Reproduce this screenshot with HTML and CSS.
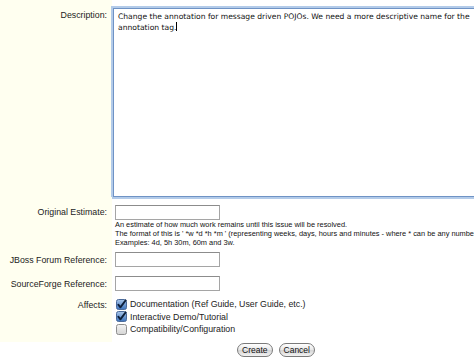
FILE: index.html
```html
<!DOCTYPE html>
<html>
<head>
<meta charset="utf-8">
<link rel="stylesheet" href="styles.css">
</head>
<body>
<div class="page">
  <div class="form">
    <div class="label lbl-desc">Description:</div>
    <div class="field">
      <div class="textarea">Change the annotation for message driven POJOs. We need a more descriptive name for the annotation tag.<span class="caret"></span></div>
    </div>

    <div class="label lbl-est">Original Estimate:</div>
    <div class="field field-est">
      <div class="input"></div>
      <div class="help">
        <div>An estimate of how much work remains until this issue will be resolved.</div>
        <div>The format of this is ' *w *d *h *m ' (representing weeks, days, hours and minutes - where * can be any number)</div>
        <div>Examples: 4d, 5h 30m, 60m and 3w.</div>
      </div>
    </div>

    <div class="label lbl-jb">JBoss Forum Reference:</div>
    <div class="field field-jb"><div class="input"></div></div>

    <div class="label lbl-sf">SourceForge Reference:</div>
    <div class="field field-sf"><div class="input"></div></div>

    <div class="label lbl-aff">Affects:</div>
    <div class="field field-aff">
      <div class="check-row">
        <svg class="box" viewBox="0 0 11 11" width="11" height="11"><defs><linearGradient id="bg1" x1="0" y1="0" x2="0" y2="1"><stop offset="0" stop-color="#a9c7ea"/><stop offset="1" stop-color="#3c73bd"/></linearGradient></defs><rect x="0.5" y="0.5" width="10" height="10" rx="2" fill="url(#bg1)" stroke="#4a6a9a"/><path d="M2.3 5.6 L4.4 8.4 L9.6 1.4" fill="none" stroke="#0d1f3a" stroke-width="1.8" stroke-linecap="round" stroke-linejoin="round"/></svg>
        <span>Documentation (Ref Guide, User Guide, etc.)</span>
      </div>
      <div class="check-row">
        <svg class="box" viewBox="0 0 11 11" width="11" height="11"><defs><linearGradient id="bg2" x1="0" y1="0" x2="0" y2="1"><stop offset="0" stop-color="#a9c7ea"/><stop offset="1" stop-color="#3c73bd"/></linearGradient></defs><rect x="0.5" y="0.5" width="10" height="10" rx="2" fill="url(#bg2)" stroke="#4a6a9a"/><path d="M2.3 5.6 L4.4 8.4 L9.6 1.4" fill="none" stroke="#0d1f3a" stroke-width="1.8" stroke-linecap="round" stroke-linejoin="round"/></svg>
        <span>Interactive Demo/Tutorial</span>
      </div>
      <div class="check-row">
        <svg class="box" viewBox="0 0 11 11" width="11" height="11"><defs><linearGradient id="bg3" x1="0" y1="0" x2="0" y2="1"><stop offset="0" stop-color="#f4f4f4"/><stop offset="1" stop-color="#d4d4d4"/></linearGradient></defs><rect x="0.5" y="0.5" width="10" height="10" rx="2" fill="url(#bg3)" stroke="#8e8e8e"/></svg>
        <span>Compatibility/Configuration</span>
      </div>
    </div>
  </div>
  <div class="buttons">
    <button class="btn">Create</button>
    <button class="btn">Cancel</button>
  </div>
</div>
</body>
</html>
```
FILE: styles.css
```css
html, body {
  margin: 0;
  padding: 0;
  background: #ffffff;
  overflow: hidden;
}
.page {
  width: 474px;
  height: 358px;
  overflow: hidden;
  font-family: "Liberation Sans", Arial, sans-serif;
  color: #222;
}
.form {
  display: grid;
  grid-template-columns: 112px 1fr;
}
.label {
  background: #fffff0;
  text-align: right;
  padding-right: 5px;
  font-size: 8.8px;
  color: #222;
  white-space: nowrap;
}
.field {
  min-width: 0;
}
.lbl-desc { padding-top: 10px; }
.textarea {
  margin-top: 8px;
  margin-left: 1px;
  width: 352px;
  height: 183px;
  border: 1px solid #6f93c5;
  box-shadow: 0 0 0 2px #b3cbe9;
  padding: 2px 4px;
  font-family: "DejaVu Sans", sans-serif;
  font-size: 7.6px;
  line-height: 11px;
  color: #111;
  background: #fff;
}
.caret {
  display: inline-block;
  width: 1px;
  height: 9px;
  background: #000;
  vertical-align: -1px;
}
.lbl-est { padding-top: 10px; }
.field-est { padding-top: 8px; padding-left: 3px; }
.input {
  width: 103px;
  height: 13px;
  border: 1px solid #a5a5a5;
  border-top-color: #8c8c8c;
  background: #fff;
}
.help {
  margin-top: 0;
  font-size: 7.4px;
  line-height: 9px;
  color: #111;
  white-space: nowrap;
}
.lbl-jb { padding-top: 8px; }
.field-jb { padding-top: 5px; padding-left: 3px; }
.lbl-sf { padding-top: 12px; }
.field-sf { padding-top: 9px; padding-left: 3px; }
.lbl-aff { padding-top: 9px; }
.field-aff { padding-top: 7px; padding-left: 4px; padding-bottom: 6px; }
.check-row {
  display: flex;
  align-items: center;
  gap: 3px;
  height: 12.5px;
  font-size: 8.8px;
}
.box { flex: none; }
.buttons {
  display: flex;
  gap: 6px;
  padding-left: 237px;
  padding-top: 1px;
}
.btn {
  font-family: "Liberation Sans", Arial, sans-serif;
  font-size: 8.5px;
  color: #111;
  height: 14px;
  padding: 0 4px;
  margin: 0;
  border: 1px solid #7a7a7a;
  border-radius: 7px;
  background: linear-gradient(#ffffff, #e6e6e6 50%, #d4d4d4 51%, #f2f2f2);
  line-height: 12px;
}
```
